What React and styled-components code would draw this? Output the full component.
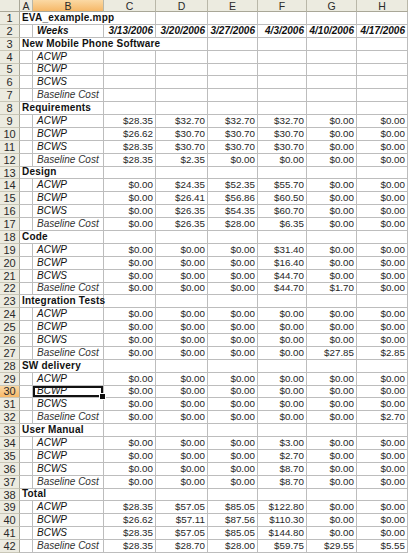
import React from 'react'
import styled, { createGlobalStyle, css } from 'styled-components'

const GlobalStyle = createGlobalStyle`
  html, body {
    margin: 0;
    padding: 0;
    background: #fff;
  }
  body {
    font-family: "Liberation Sans", Arial, sans-serif;
  }
`

const COLS = ['A', 'B', 'C', 'D', 'E', 'F', 'G', 'H']

const Sheet = styled.div`
  display: grid;
  grid-template-columns: 20px 13px 71px 52px 52px 50px 49px 50px 51px;
  grid-template-rows: 12px repeat(42, minmax(0, 1fr));
  width: 408px;
  height: 553px;
  overflow: hidden;
  font-size: 10px;
`

const headBg = css`
  background: ${(p) => (p.$active ? 'linear-gradient(#fbd9a4, #f6b868)' : '#ecebe0')};
  color: #2a2a2a;
  box-sizing: border-box;
  display: flex;
  align-items: center;
  justify-content: center;
`

const Corner = styled.div`
  ${headBg}
  border-right: 1px solid #a9a798;
  border-bottom: 1px solid #a9a798;
`

const ColHead = styled.div`
  ${headBg}
  border-right: 1px solid #b9b7a8;
  border-bottom: 1px solid #a9a798;
  font-size: 10.5px;
`

const RowHead = styled.div`
  ${headBg}
  border-right: 1px solid #a9a798;
  border-bottom: 1px solid #c9c7b8;
  font-size: 11px;
`

const Cell = styled.div`
  box-sizing: border-box;
  grid-column: span ${(p) => p.$span || 1};
  border-right: 1px solid #bdbdbd;
  border-bottom: 1px solid #bdbdbd;
  display: flex;
  align-items: flex-end;
  justify-content: ${(p) => (p.$right ? 'flex-end' : 'flex-start')};
  padding: 0 ${(p) => (p.$right ? '2px' : '0')} 0 ${(p) => p.$indent || 0}px;
  white-space: nowrap;
  line-height: 12px;
  font-size: ${(p) => (p.$num ? '9.8px' : '10px')};
  font-weight: ${(p) => (p.$bold ? 'bold' : 'normal')};
  font-style: ${(p) => (p.$italic ? 'italic' : 'normal')};
  color: ${(p) => (p.$num ? '#262626' : p.$soft ? '#333' : '#111')};
  letter-spacing: ${(p) => (p.$title ? '0.2px' : '0')};
  position: relative;

  ${(p) =>
    p.$selected &&
    css`
      box-shadow: inset 0 0 0 2px #111;
      &::after {
        content: '';
        position: absolute;
        right: -3px;
        bottom: -3px;
        width: 5px;
        height: 5px;
        background: #111;
        border: 1px solid #fff;
        z-index: 2;
      }
    `}
`

const z = ['$0.00', '$0.00', '$0.00', '$0.00', '$0.00', '$0.00']

const rows = [
  { title: 'EVA_example.mpp', span: 3 },
  { label: 'Weeks', head: true, values: ['3/13/2006', '3/20/2006', '3/27/2006', '4/3/2006', '4/10/2006', '4/17/2006'] },
  { title: 'New Mobile Phone Software', span: 4 },
  { label: 'ACWP', values: [] },
  { label: 'BCWP', values: [] },
  { label: 'BCWS', values: [] },
  { label: 'Baseline Cost', values: [] },
  { title: 'Requirements' },
  { label: 'ACWP', values: ['$28.35', '$32.70', '$32.70', '$32.70', '$0.00', '$0.00'] },
  { label: 'BCWP', values: ['$26.62', '$30.70', '$30.70', '$30.70', '$0.00', '$0.00'] },
  { label: 'BCWS', values: ['$28.35', '$30.70', '$30.70', '$30.70', '$0.00', '$0.00'] },
  { label: 'Baseline Cost', values: ['$28.35', '$2.35', '$0.00', '$0.00', '$0.00', '$0.00'] },
  { title: 'Design' },
  { label: 'ACWP', values: ['$0.00', '$24.35', '$52.35', '$55.70', '$0.00', '$0.00'] },
  { label: 'BCWP', values: ['$0.00', '$26.41', '$56.86', '$60.50', '$0.00', '$0.00'] },
  { label: 'BCWS', values: ['$0.00', '$26.35', '$54.35', '$60.70', '$0.00', '$0.00'] },
  { label: 'Baseline Cost', values: ['$0.00', '$26.35', '$28.00', '$6.35', '$0.00', '$0.00'] },
  { title: 'Code' },
  { label: 'ACWP', values: ['$0.00', '$0.00', '$0.00', '$31.40', '$0.00', '$0.00'] },
  { label: 'BCWP', values: ['$0.00', '$0.00', '$0.00', '$16.40', '$0.00', '$0.00'] },
  { label: 'BCWS', values: ['$0.00', '$0.00', '$0.00', '$44.70', '$0.00', '$0.00'] },
  { label: 'Baseline Cost', values: ['$0.00', '$0.00', '$0.00', '$44.70', '$1.70', '$0.00'] },
  { title: 'Integration Tests' },
  { label: 'ACWP', values: z },
  { label: 'BCWP', values: z },
  { label: 'BCWS', values: z },
  { label: 'Baseline Cost', values: ['$0.00', '$0.00', '$0.00', '$0.00', '$27.85', '$2.85'] },
  { title: 'SW delivery' },
  { label: 'ACWP', values: z },
  { label: 'BCWP', values: z, selected: true },
  { label: 'BCWS', values: z },
  { label: 'Baseline Cost', values: ['$0.00', '$0.00', '$0.00', '$0.00', '$0.00', '$2.70'] },
  { title: 'User Manual' },
  { label: 'ACWP', values: ['$0.00', '$0.00', '$0.00', '$3.00', '$0.00', '$0.00'] },
  { label: 'BCWP', values: ['$0.00', '$0.00', '$0.00', '$2.70', '$0.00', '$0.00'] },
  { label: 'BCWS', values: ['$0.00', '$0.00', '$0.00', '$8.70', '$0.00', '$0.00'] },
  { label: 'Baseline Cost', values: ['$0.00', '$0.00', '$0.00', '$8.70', '$0.00', '$0.00'] },
  { title: 'Total' },
  { label: 'ACWP', values: ['$28.35', '$57.05', '$85.05', '$122.80', '$0.00', '$0.00'] },
  { label: 'BCWP', values: ['$26.62', '$57.11', '$87.56', '$110.30', '$0.00', '$0.00'] },
  { label: 'BCWS', values: ['$28.35', '$57.05', '$85.05', '$144.80', '$0.00', '$0.00'] },
  { label: 'Baseline Cost', values: ['$28.35', '$28.70', '$28.00', '$59.75', '$29.55', '$5.55'] },
]

function Row({ row, n }) {
  const out = [
    <RowHead key="h" $active={row.selected}>
      {n}
    </RowHead>,
  ]
  if (row.title) {
    const span = row.span || 2
    out.push(
      <Cell key="t" $span={span} $bold $title $indent={2}>
        {row.title}
      </Cell>
    )
    for (let i = span; i < COLS.length; i++) out.push(<Cell key={i} />)
    return out
  }
  out.push(<Cell key="a" />)
  out.push(
    <Cell key="b" $italic $bold={row.head} $indent={4} $soft={row.label === 'Baseline Cost'} $selected={row.selected}>
      {row.label}
    </Cell>
  )
  for (let i = 0; i < 6; i++) {
    out.push(
      <Cell key={i} $right $num={!row.head} $bold={row.head} $italic={row.head}>
        {row.values[i] || ''}
      </Cell>
    )
  }
  return out
}

export default function App() {
  return (
    <>
      <GlobalStyle />
      <Sheet>
        <Corner />
        {COLS.map((c) => (
          <ColHead key={c} $active={c === 'B'}>
            {c}
          </ColHead>
        ))}
        {rows.map((row, i) => (
          <Row key={i} row={row} n={i + 1} />
        ))}
      </Sheet>
    </>
  )
}
